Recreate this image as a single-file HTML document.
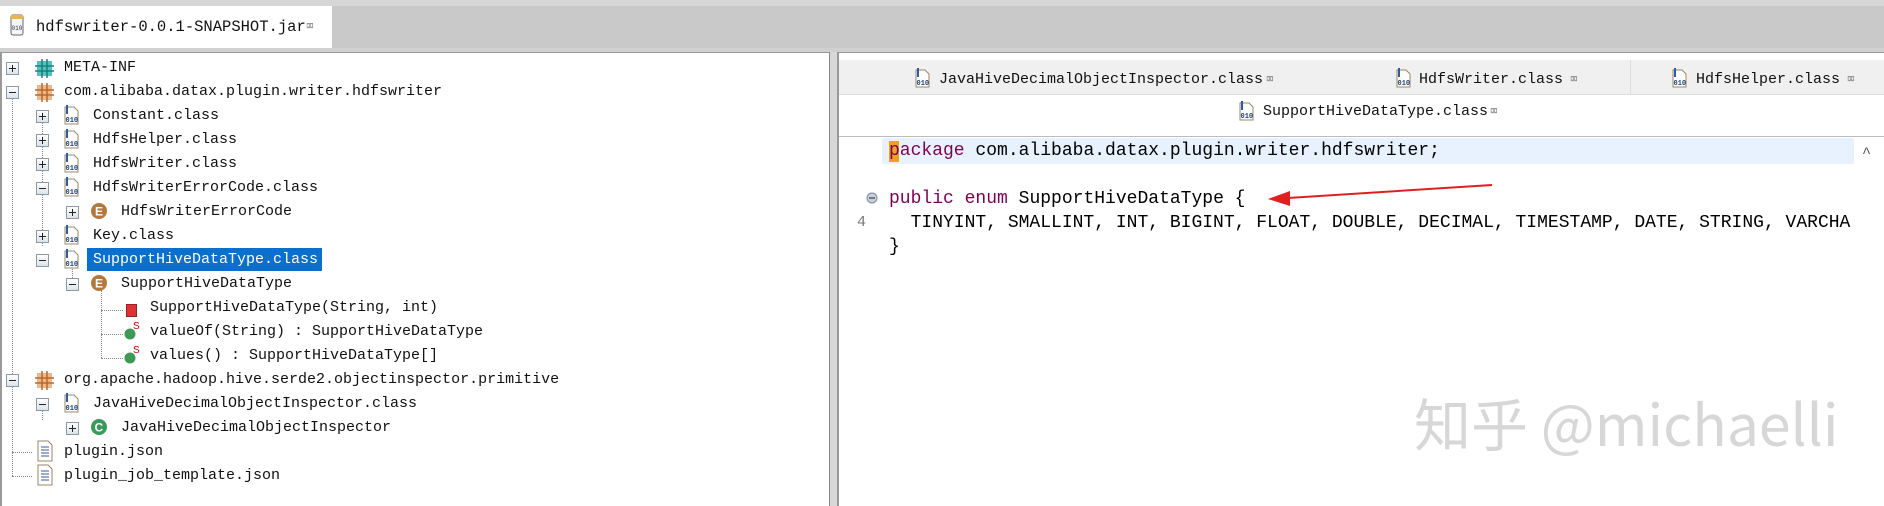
<!DOCTYPE html>
<html><head><meta charset="utf-8"><style>
body{margin:0;width:1884px;height:506px;background:#fff;position:relative;overflow:hidden;font-family:"Liberation Mono",monospace;}
.a{position:absolute;}
.t{position:absolute;font-size:15px;line-height:20px;color:#111;white-space:nowrap;}
.exp{position:absolute;width:11px;height:11px;border:1px solid #8a9bb0;background:linear-gradient(#fff,#dde3ea);}
.exp:before{content:"";position:absolute;left:2px;top:5px;width:7px;height:1px;background:#222;}
.exp.p:after{content:"";position:absolute;left:5px;top:2px;width:1px;height:7px;background:#222;}
.vl{position:absolute;border-left:1px dotted #888;width:0;}
.hl{position:absolute;border-top:1px dotted #888;height:0;}
.code{position:absolute;font-size:18px;line-height:24px;color:#000;white-space:pre;}
.kw{color:#7f0055;}
</style></head><body>
<div class="a" style="left:0;top:0;width:1884px;height:6px;background:#d6d6d6"></div>
<div class="a" style="left:0;top:6px;width:1884px;height:42px;background:#c9c9c9"></div>
<div class="a" style="left:0;top:6px;width:332px;height:42px;background:#fff"></div>
<svg class="a" style="left:10px;top:14px" width="14" height="22"><rect x="1" y="1" width="12" height="20" rx="2" fill="#f4f4f4" stroke="#667"/><rect x="1" y="1" width="12" height="4" fill="#e8b74a"/><text x="1.5" y="16" font-size="6" fill="#234" font-family="Liberation Mono">010</text></svg>
<div class="t" style="left:36px;top:17px;font-size:15.5px">hdfswriter-0.0.1-SNAPSHOT.jar</div>
<div class="t" style="left:306px;top:17px;color:#888;font-size:13px">⌧</div>
<div class="a" style="left:0;top:48px;width:1884px;height:4px;background:#d0d0d0"></div>

<div class="a" style="left:0;top:52px;width:829px;height:454px;background:#fff;border-left:2px solid #999;border-top:1px solid #999;box-sizing:border-box"></div>
<div class="a" style="left:829px;top:52px;width:8px;height:454px;background:#d8d8d8;border-left:1px solid #888"></div>

<div class="vl" style="left:12px;top:98px;height:378px"></div>
<div class="vl" style="left:42px;top:122px;height:124px"></div>
<div class="vl" style="left:42px;top:400px;height:20px"></div>
<div class="vl" style="left:72px;top:266px;height:20px"></div>
<div class="vl" style="left:101px;top:290px;height:68px"></div>
<div class="hl" style="left:12px;top:452px;width:20px"></div>
<div class="hl" style="left:12px;top:476px;width:20px"></div>
<div class="hl" style="left:101px;top:310px;width:22px"></div>
<div class="hl" style="left:101px;top:334px;width:22px"></div>
<div class="hl" style="left:101px;top:358px;width:22px"></div>

<div class="exp p" style="left:6px;top:62px"></div>
<svg class="a" style="left:35px;top:59px" width="19" height="19"><rect x="2" y="2" width="15" height="15" fill="#4cc5c0"/><path d="M7 0v19M12 0v19M0 7h19M0 12h19" stroke="#1f7e7a" stroke-width="1.5"/></svg>
<div class="t" style="left:64px;top:58px">META-INF</div>

<div class="exp" style="left:6px;top:86px"></div>
<svg class="a" style="left:35px;top:83px" width="19" height="19"><rect x="2" y="2" width="15" height="15" fill="#f0b88a"/><path d="M7 0v19M12 0v19M0 7h19M0 12h19" stroke="#b56a2e" stroke-width="1.5"/></svg>
<div class="t" style="left:64px;top:82px">com.alibaba.datax.plugin.writer.hdfswriter</div>

<svg width="0" height="0" style="position:absolute"><defs><g id="ci"><path d="M3 3h9l4 4v13H3z" fill="#fff" stroke="#998866"/><path d="M5 1v9" stroke="#2a5caa" stroke-width="2"/><text x="3.5" y="18" font-size="7" font-weight="bold" fill="#1f3f7a" font-family="Liberation Mono">010</text></g></defs></svg>

<div class="exp p" style="left:36px;top:110px"></div><svg class="a" style="left:62px;top:104px" width="20" height="22"><use href="#ci"/></svg><div class="t" style="left:93px;top:106px">Constant.class</div>
<div class="exp p" style="left:36px;top:134px"></div><svg class="a" style="left:62px;top:128px" width="20" height="22"><use href="#ci"/></svg><div class="t" style="left:93px;top:130px">HdfsHelper.class</div>
<div class="exp p" style="left:36px;top:158px"></div><svg class="a" style="left:62px;top:152px" width="20" height="22"><use href="#ci"/></svg><div class="t" style="left:93px;top:154px">HdfsWriter.class</div>
<div class="exp" style="left:36px;top:182px"></div><svg class="a" style="left:62px;top:176px" width="20" height="22"><use href="#ci"/></svg><div class="t" style="left:93px;top:178px">HdfsWriterErrorCode.class</div>
<div class="exp p" style="left:66px;top:206px"></div><svg class="a" style="left:90px;top:202px" width="18" height="18"><circle cx="9" cy="9" r="8" fill="#b5773a"/><text x="5" y="13.5" font-size="12" font-weight="bold" fill="#fff" font-family="Liberation Sans">E</text></svg><div class="t" style="left:121px;top:202px">HdfsWriterErrorCode</div>
<div class="exp p" style="left:36px;top:230px"></div><svg class="a" style="left:62px;top:224px" width="20" height="22"><use href="#ci"/></svg><div class="t" style="left:93px;top:226px">Key.class</div>
<div class="exp" style="left:36px;top:254px"></div><svg class="a" style="left:62px;top:248px" width="20" height="22"><use href="#ci"/></svg>
<div class="a" style="left:87px;top:248px;width:235px;height:23px;background:#0b6fce"></div>
<div class="t" style="left:93px;top:250px;color:#fff">SupportHiveDataType.class</div>
<div class="exp" style="left:66px;top:278px"></div><svg class="a" style="left:90px;top:274px" width="18" height="18"><circle cx="9" cy="9" r="8" fill="#b5773a"/><text x="5" y="13.5" font-size="12" font-weight="bold" fill="#fff" font-family="Liberation Sans">E</text></svg><div class="t" style="left:121px;top:274px">SupportHiveDataType</div>
<div class="a" style="left:126px;top:304px;width:9px;height:11px;background:#d33;border:1px solid #922"></div><div class="t" style="left:150px;top:298px">SupportHiveDataType(String, int)</div>
<svg class="a" style="left:122px;top:320px" width="20" height="22"><circle cx="8" cy="14" r="5.5" fill="#3d9a55"/><text x="11" y="9" font-size="10" fill="#c00" font-family="Liberation Sans">S</text></svg><div class="t" style="left:150px;top:322px">valueOf(String) : SupportHiveDataType</div>
<svg class="a" style="left:122px;top:344px" width="20" height="22"><circle cx="8" cy="14" r="5.5" fill="#3d9a55"/><text x="11" y="9" font-size="10" fill="#c00" font-family="Liberation Sans">S</text></svg><div class="t" style="left:150px;top:346px">values() : SupportHiveDataType[]</div>

<div class="exp" style="left:6px;top:374px"></div>
<svg class="a" style="left:35px;top:371px" width="19" height="19"><rect x="2" y="2" width="15" height="15" fill="#f0b88a"/><path d="M7 0v19M12 0v19M0 7h19M0 12h19" stroke="#b56a2e" stroke-width="1.5"/></svg>
<div class="t" style="left:64px;top:370px">org.apache.hadoop.hive.serde2.objectinspector.primitive</div>
<div class="exp" style="left:36px;top:398px"></div><svg class="a" style="left:62px;top:392px" width="20" height="22"><use href="#ci"/></svg><div class="t" style="left:93px;top:394px">JavaHiveDecimalObjectInspector.class</div>
<div class="exp p" style="left:66px;top:422px"></div><svg class="a" style="left:90px;top:418px" width="18" height="18"><circle cx="9" cy="9" r="8" fill="#3a9a5a"/><text x="4.5" y="13.5" font-size="12" font-weight="bold" fill="#fff" font-family="Liberation Sans">C</text></svg><div class="t" style="left:121px;top:418px">JavaHiveDecimalObjectInspector</div>
<svg class="a" style="left:37px;top:440px" width="16" height="22"><path d="M1 1h10l4 4v16H1z" fill="#fff" stroke="#998866"/><path d="M4 7h8M4 10h8M4 13h8M4 16h8" stroke="#3a5a9a"/></svg><div class="t" style="left:64px;top:442px">plugin.json</div>
<svg class="a" style="left:37px;top:464px" width="16" height="22"><path d="M1 1h10l4 4v16H1z" fill="#fff" stroke="#998866"/><path d="M4 7h8M4 10h8M4 13h8M4 16h8" stroke="#3a5a9a"/></svg><div class="t" style="left:64px;top:466px">plugin_job_template.json</div>

<div class="a" style="left:837px;top:52px;width:1047px;height:454px;background:#fff;border-left:2px solid #999;border-top:1px solid #999;box-sizing:border-box"></div>
<div class="a" style="left:839px;top:60px;width:1045px;height:34px;background:#f0f0f0;border-bottom:1px solid #ddd"></div>
<div class="a" style="left:1630px;top:60px;width:1px;height:34px;background:#ddd"></div>
<svg class="a" style="left:913px;top:67px" width="20" height="22"><use href="#ci"/></svg><div class="t" style="left:939px;top:70px">JavaHiveDecimalObjectInspector.class</div><div class="t" style="left:1266px;top:70px;color:#888;font-size:13px">⌧</div>
<svg class="a" style="left:1394px;top:67px" width="20" height="22"><use href="#ci"/></svg><div class="t" style="left:1419px;top:70px">HdfsWriter.class</div><div class="t" style="left:1570px;top:70px;color:#888;font-size:13px">⌧</div>
<svg class="a" style="left:1670px;top:67px" width="20" height="22"><use href="#ci"/></svg><div class="t" style="left:1696px;top:70px">HdfsHelper.class</div><div class="t" style="left:1847px;top:70px;color:#888;font-size:13px">⌧</div>
<svg class="a" style="left:1237px;top:100px" width="20" height="22"><use href="#ci"/></svg><div class="t" style="left:1263px;top:102px">SupportHiveDataType.class</div><div class="t" style="left:1490px;top:102px;color:#888;font-size:13px">⌧</div>
<div class="a" style="left:839px;top:136px;width:1045px;height:1px;background:#bbb"></div>
<div class="a" style="left:882px;top:138px;width:972px;height:26px;background:#e8f2fe"></div>
<div class="a" style="left:889px;top:141px;width:10px;height:21px;background:#f0a020"></div>
<div class="code" style="left:889px;top:139px"><span class="kw">package</span> com.alibaba.datax.plugin.writer.hdfswriter;</div>
<div class="t" style="left:1862px;top:144px;color:#555">^</div>
<svg class="a" style="left:866px;top:192px" width="12" height="12"><circle cx="6" cy="6" r="5" fill="#c8d0da" stroke="#7a8aa0"/><path d="M3 6h6" stroke="#223"/></svg>
<div class="code" style="left:889px;top:187px"><span class="kw">public</span> <span class="kw">enum</span> SupportHiveDataType {</div>
<div class="t" style="left:857px;top:213px;color:#777">4</div>
<div class="code" style="left:889px;top:211px">  TINYINT, SMALLINT, INT, BIGINT, FLOAT, DOUBLE, DECIMAL, TIMESTAMP, DATE, STRING, VARCHA</div>
<div class="code" style="left:889px;top:235px">}</div>
<svg class="a" style="left:1260px;top:180px" width="240" height="30"><path d="M232 5L28 18" stroke="#e02020" stroke-width="2"/><path d="M8 19l22-8v15z" fill="#e02020"/></svg>

<div class="a" style="left:1414px;top:388px;font-family:'Noto Sans CJK SC','Liberation Sans',sans-serif;font-size:57px;color:rgba(150,150,150,0.38);white-space:nowrap;line-height:68px">知乎 @michaelli</div>
</body></html>
